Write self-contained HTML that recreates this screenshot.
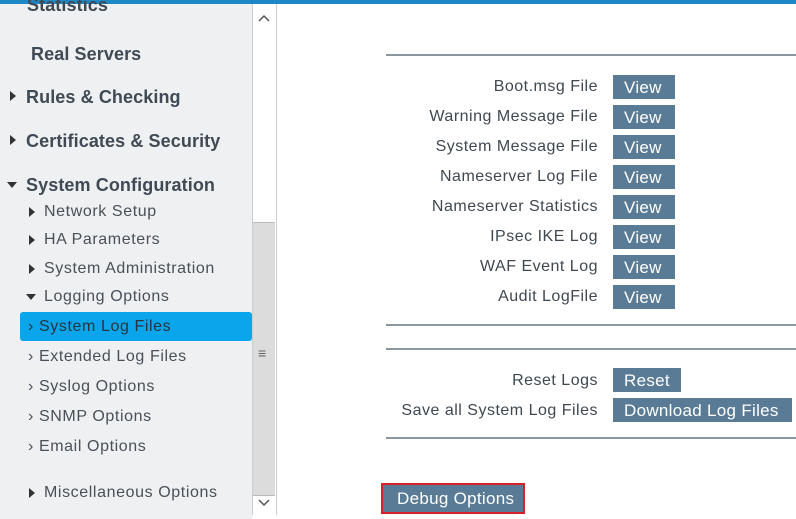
<!DOCTYPE html>
<html><head><style>
body{margin:0;width:796px;height:519px;overflow:hidden;background:#fff;font-family:"Liberation Sans",sans-serif;position:relative}
.top{position:absolute;left:0;top:0;width:796px;height:4px;background:#1e88c7}
.side{position:absolute;left:0;top:4px;width:252px;height:515px;background:#eef0f1}
.sb{position:absolute;left:252px;top:4px;width:23px;height:511px;background:#fff;border-left:1px solid #ccc;border-right:1px solid #ccc}
.thumb{position:absolute;left:253px;top:222px;width:22px;height:272px;background:#dcdcdc;border-top:1px solid #bbb;border-bottom:1px solid #bbb}
.t{position:absolute;white-space:nowrap;color:#3f4850}
.b{font-weight:bold;font-size:18px;color:#3f4a55;letter-spacing:0.1px}
.s{font-size:16px;color:#4a5058;letter-spacing:0.6px}
.tri{position:absolute;width:0;height:0;border-top:5px solid transparent;border-bottom:5px solid transparent;border-left:6px solid #333}
.trd{position:absolute;width:0;height:0;border-left:5px solid transparent;border-right:5px solid transparent;border-top:6px solid #333}
.hl{position:absolute;left:20px;top:312px;width:232px;height:29px;background:#0aa5ea;border-radius:3px}
.line{position:absolute;left:386px;width:410px;height:2px;background:#8a96a0}
.lab{position:absolute;right:198px;font-size:16px;letter-spacing:0.5px;color:#3f4850;white-space:nowrap}
.btn{position:absolute;left:613px;height:24px;background:#5a7b95;color:#fff;font-size:17px;line-height:25px;padding:0 11px;box-sizing:border-box;letter-spacing:0.3px}
</style></head><body>
<div class="top"></div>
<div class="side"></div>
<div class="sb"></div>
<div class="thumb"></div>
<svg style="position:absolute;left:258px;top:14px" width="12" height="8"><path d="M1 7 L6 2 L11 7" fill="none" stroke="#555" stroke-width="1.5"/></svg>
<div class="t" style="left:258px;top:345px;font-size:14px;color:#666">&#8801;</div>
<svg style="position:absolute;left:258px;top:499px" width="12" height="8"><path d="M1 1 L6 6 L11 1" fill="none" stroke="#555" stroke-width="1.5"/></svg>

<div class="t b" style="left:27px;top:-5px">Statistics</div>
<div class="t b" style="left:31px;top:44px">Real Servers</div>
<div class="tri" style="left:10px;top:91px"></div><div class="t b" style="left:26px;top:87px">Rules &amp; Checking</div>
<div class="tri" style="left:10px;top:135px"></div><div class="t b" style="left:26px;top:131px">Certificates &amp; Security</div>
<div class="trd" style="left:7px;top:182px"></div><div class="t b" style="left:26px;top:175px">System Configuration</div>
<div class="tri" style="left:29px;top:207px"></div><div class="t s" style="left:44px;top:203px">Network Setup</div>
<div class="tri" style="left:29px;top:235px"></div><div class="t s" style="left:44px;top:231px">HA Parameters</div>
<div class="tri" style="left:29px;top:264px"></div><div class="t s" style="left:44px;top:260px">System Administration</div>
<div class="trd" style="left:26px;top:294px"></div><div class="t s" style="left:44px;top:288px">Logging Options</div>
<div class="hl"></div>
<div class="t s" style="left:28px;top:318px;color:#2a3440">› System Log Files</div>
<div class="t s" style="left:28px;top:348px">› Extended Log Files</div>
<div class="t s" style="left:28px;top:378px">› Syslog Options</div>
<div class="t s" style="left:28px;top:408px">› SNMP Options</div>
<div class="t s" style="left:28px;top:438px">› Email Options</div>
<div class="tri" style="left:29px;top:488px"></div><div class="t s" style="left:44px;top:484px">Miscellaneous Options</div>

<div class="line" style="top:54px"></div>
<div class="lab" style="top:78px">Boot.msg File</div><div class="btn" style="top:75px;width:62px">View</div>
<div class="lab" style="top:108px">Warning Message File</div><div class="btn" style="top:105px;width:62px">View</div>
<div class="lab" style="top:138px">System Message File</div><div class="btn" style="top:135px;width:62px">View</div>
<div class="lab" style="top:168px">Nameserver Log File</div><div class="btn" style="top:165px;width:62px">View</div>
<div class="lab" style="top:198px">Nameserver Statistics</div><div class="btn" style="top:195px;width:62px">View</div>
<div class="lab" style="top:228px">IPsec IKE Log</div><div class="btn" style="top:225px;width:62px">View</div>
<div class="lab" style="top:258px">WAF Event Log</div><div class="btn" style="top:255px;width:62px">View</div>
<div class="lab" style="top:288px">Audit LogFile</div><div class="btn" style="top:285px;width:62px">View</div>
<div class="line" style="top:324px"></div>
<div class="line" style="top:348px"></div>
<div class="lab" style="top:372px">Reset Logs</div><div class="btn" style="top:368px;width:68px">Reset</div>
<div class="lab" style="top:402px">Save all System Log Files</div><div class="btn" style="top:398px;width:179px">Download Log Files</div>
<div class="line" style="top:437px"></div>
<div style="position:absolute;left:381px;top:483px;width:144px;height:31px;border:2px solid #d81f2a;box-sizing:border-box;background:#5a7b95;color:#fff;font-size:17px;line-height:28px;padding-left:14px;letter-spacing:0.3px">Debug Options</div>
</body></html>
